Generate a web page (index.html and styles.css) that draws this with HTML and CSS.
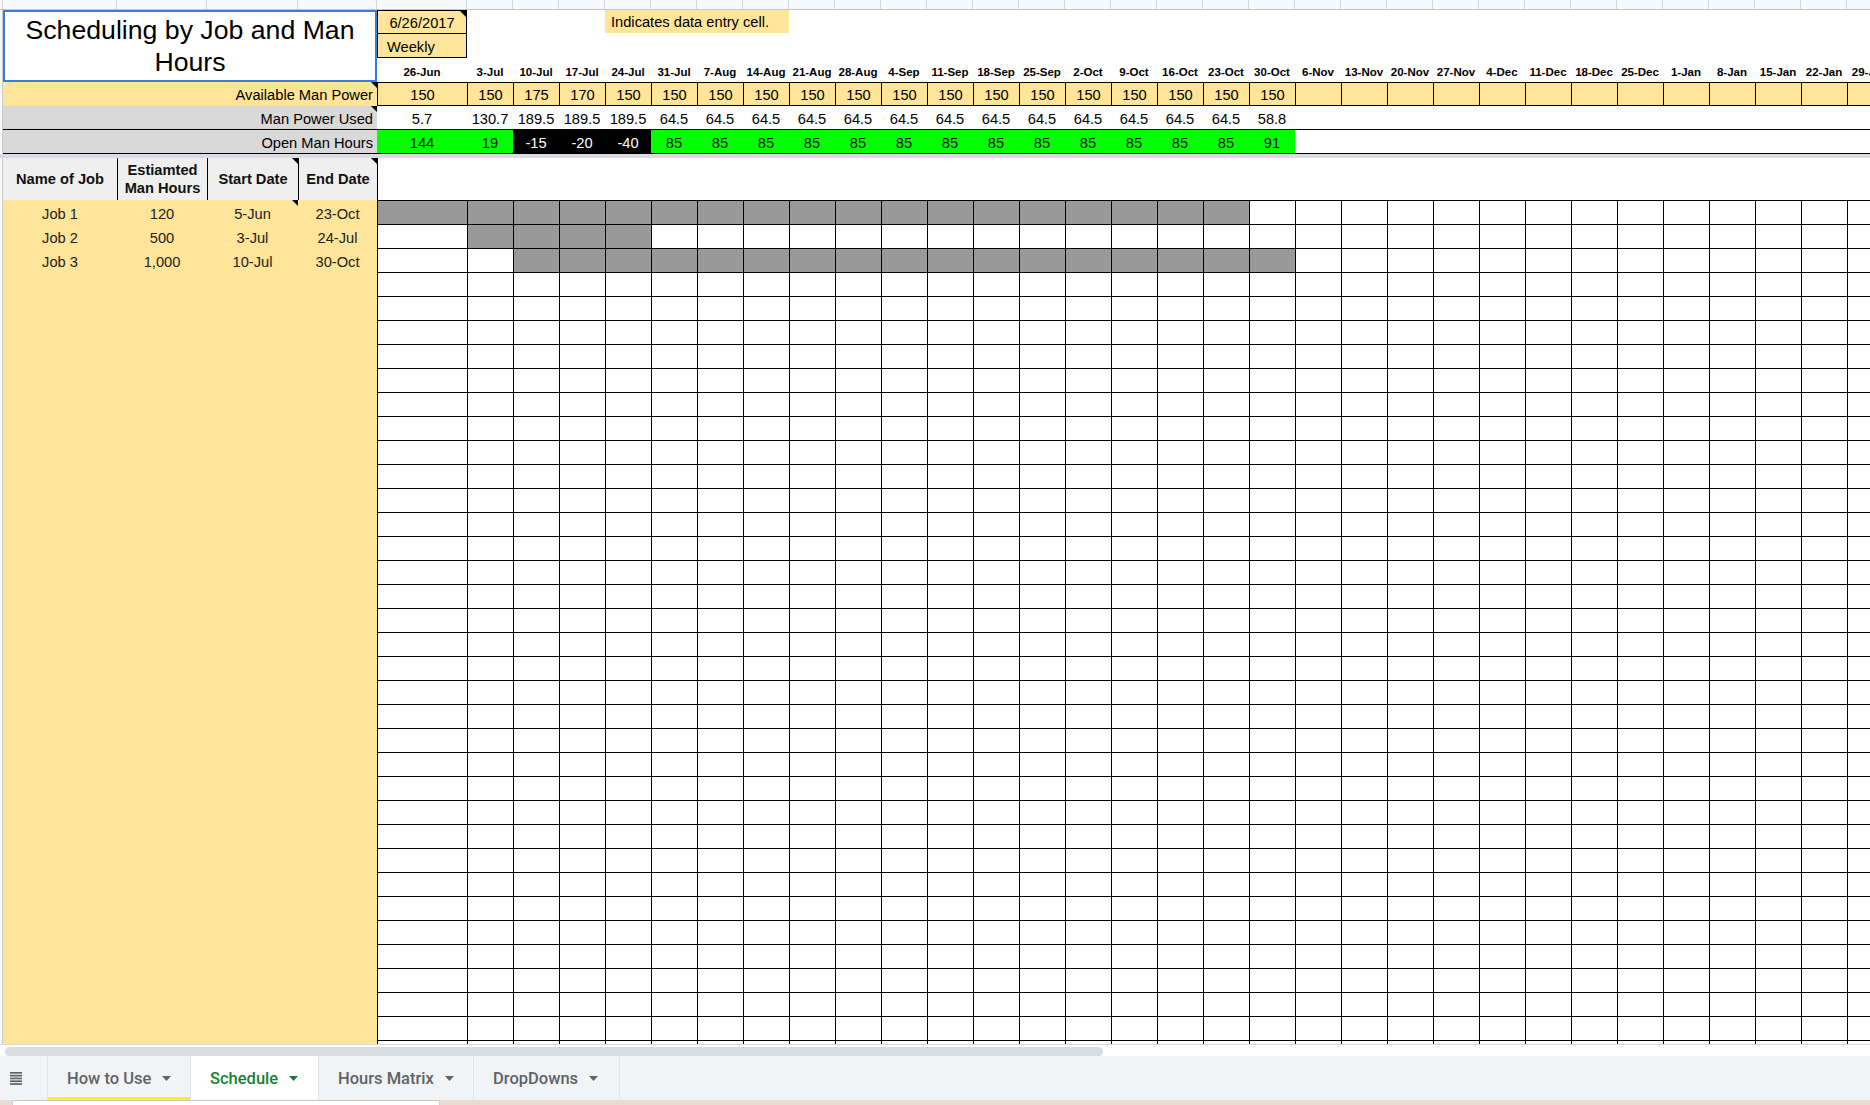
FILE: index.html
```html
<!DOCTYPE html>
<html>
<head>
<meta charset="utf-8">
<link rel="stylesheet" href="styles.css">
</head>
<body>
<div class="app">
  <div class="colhdr cols">
    <i></i><i></i><i></i><i></i><i></i><i></i>
    <i></i><i></i><i></i><i></i><i></i><i></i><i></i><i></i><i></i><i></i>
    <i></i><i></i><i></i><i></i><i></i><i></i><i></i><i></i><i></i><i></i>
    <i></i><i></i><i></i><i></i><i></i><i></i><i></i><i></i><i></i><i></i>
    <i></i>
  </div>

  <div class="frozen cols">
    <div class="strip"></div>
    <div class="title">Scheduling by Job and Man Hours</div>
    <div class="c r1 entry note">6/26/2017</div>
    <div class="c r1 info">Indicates data entry cell.</div>
    <div class="c r2 entry weekly">Weekly</div>

    <div class="c r3 dh">26-Jun</div><div class="c r3 dh">3-Jul</div><div class="c r3 dh">10-Jul</div><div class="c r3 dh">17-Jul</div><div class="c r3 dh">24-Jul</div><div class="c r3 dh">31-Jul</div><div class="c r3 dh">7-Aug</div><div class="c r3 dh">14-Aug</div><div class="c r3 dh">21-Aug</div><div class="c r3 dh">28-Aug</div><div class="c r3 dh">4-Sep</div><div class="c r3 dh">11-Sep</div><div class="c r3 dh">18-Sep</div><div class="c r3 dh">25-Sep</div><div class="c r3 dh">2-Oct</div><div class="c r3 dh">9-Oct</div><div class="c r3 dh">16-Oct</div><div class="c r3 dh">23-Oct</div><div class="c r3 dh">30-Oct</div><div class="c r3 dh">6-Nov</div><div class="c r3 dh">13-Nov</div><div class="c r3 dh">20-Nov</div><div class="c r3 dh">27-Nov</div><div class="c r3 dh">4-Dec</div><div class="c r3 dh">11-Dec</div><div class="c r3 dh">18-Dec</div><div class="c r3 dh">25-Dec</div><div class="c r3 dh">1-Jan</div><div class="c r3 dh">8-Jan</div><div class="c r3 dh">15-Jan</div><div class="c r3 dh">22-Jan</div><div class="c r3 dh">29-Jan</div>

    <div class="lbl r4 yel note">Available Man Power</div>
    <div class="c r4 av">150</div><div class="c r4 av">150</div><div class="c r4 av">175</div><div class="c r4 av">170</div><div class="c r4 av">150</div><div class="c r4 av">150</div><div class="c r4 av">150</div><div class="c r4 av">150</div><div class="c r4 av">150</div><div class="c r4 av">150</div><div class="c r4 av">150</div><div class="c r4 av">150</div><div class="c r4 av">150</div><div class="c r4 av">150</div><div class="c r4 av">150</div><div class="c r4 av">150</div><div class="c r4 av">150</div><div class="c r4 av">150</div><div class="c r4 av">150</div>
    <div class="c r4 av"></div><div class="c r4 av"></div><div class="c r4 av"></div><div class="c r4 av"></div><div class="c r4 av"></div><div class="c r4 av"></div><div class="c r4 av"></div><div class="c r4 av"></div><div class="c r4 av"></div><div class="c r4 av"></div><div class="c r4 av"></div><div class="c r4 av"></div><div class="c r4 av"></div>

    <div class="lbl r5 gry note">Man Power Used</div>
    <div class="c r5 u">5.7</div><div class="c r5 u">130.7</div><div class="c r5 u">189.5</div><div class="c r5 u">189.5</div><div class="c r5 u">189.5</div><div class="c r5 u">64.5</div><div class="c r5 u">64.5</div><div class="c r5 u">64.5</div><div class="c r5 u">64.5</div><div class="c r5 u">64.5</div><div class="c r5 u">64.5</div><div class="c r5 u">64.5</div><div class="c r5 u">64.5</div><div class="c r5 u">64.5</div><div class="c r5 u">64.5</div><div class="c r5 u">64.5</div><div class="c r5 u">64.5</div><div class="c r5 u">64.5</div><div class="c r5 u">58.8</div>
    <div class="c r5 u"></div><div class="c r5 u"></div><div class="c r5 u"></div><div class="c r5 u"></div><div class="c r5 u"></div><div class="c r5 u"></div><div class="c r5 u"></div><div class="c r5 u"></div><div class="c r5 u"></div><div class="c r5 u"></div><div class="c r5 u"></div><div class="c r5 u"></div><div class="c r5 u"></div>

    <div class="lbl r6 gry">Open Man Hours</div>
    <div class="c r6 o g">144</div><div class="c r6 o g">19</div><div class="c r6 o k">-15</div><div class="c r6 o k">-20</div><div class="c r6 o k">-40</div><div class="c r6 o g">85</div><div class="c r6 o g">85</div><div class="c r6 o g">85</div><div class="c r6 o g">85</div><div class="c r6 o g">85</div><div class="c r6 o g">85</div><div class="c r6 o g">85</div><div class="c r6 o g">85</div><div class="c r6 o g">85</div><div class="c r6 o g">85</div><div class="c r6 o g">85</div><div class="c r6 o g">85</div><div class="c r6 o g">85</div><div class="c r6 o g">91</div>
    <div class="c r6 o"></div><div class="c r6 o"></div><div class="c r6 o"></div><div class="c r6 o"></div><div class="c r6 o"></div><div class="c r6 o"></div><div class="c r6 o"></div><div class="c r6 o"></div><div class="c r6 o"></div><div class="c r6 o"></div><div class="c r6 o"></div><div class="c r6 o"></div><div class="c r6 o"></div>
  </div>

  <div class="freeze"></div>

  <div class="body cols">
    <div class="strip"></div>
    <div class="h hA">Name of Job</div>
    <div class="h hB">Estiamted<br>Man Hours</div>
    <div class="h hC note">Start Date</div>
    <div class="h hD note">End Date</div>
    <div class="hR"></div>

    <div class="fill"></div>

    <div class="j ca br2">Job 1</div><div class="j cb br2">120</div><div class="j cc br2 note">5-Jun</div><div class="j cd br2">23-Oct</div>
    <div class="j ca br3">Job 2</div><div class="j cb br3">500</div><div class="j cc br3">3-Jul</div><div class="j cd br3">24-Jul</div>
    <div class="j ca br4">Job 3</div><div class="j cb br4">1,000</div><div class="j cc br4">10-Jul</div><div class="j cd br4">30-Oct</div>

    <div class="bar b1"></div>
    <div class="bar b2"></div>
    <div class="bar b3"></div>

    <div class="glA"></div>
    <div class="glB"></div>
  </div>

  <div class="hscroll"><div class="thumb"></div></div>

  <div class="tabbar">
    <div class="menu">
      <svg width="12" height="13" viewBox="0 0 12 13"><rect y="0" width="12" height="1.7"/><rect y="2.8" width="12" height="1.7"/><rect y="5.6" width="12" height="1.7"/><rect y="8.4" width="12" height="1.7"/><rect y="11.2" width="12" height="1.7"/></svg>
    </div>
    <div class="tab t1 marked">How to Use<svg class="dd" width="9" height="5" viewBox="0 0 9 5"><path d="M0 0h9L4.5 5z"/></svg></div>
    <div class="tab t2 active">Schedule<svg class="dd" width="9" height="5" viewBox="0 0 9 5"><path d="M0 0h9L4.5 5z"/></svg></div>
    <div class="tab t3">Hours Matrix<svg class="dd" width="9" height="5" viewBox="0 0 9 5"><path d="M0 0h9L4.5 5z"/></svg></div>
    <div class="tab t4">DropDowns<svg class="dd" width="9" height="5" viewBox="0 0 9 5"><path d="M0 0h9L4.5 5z"/></svg></div>
    <div class="tabrest"></div>
  </div>

  <div class="bottom"><div class="popup"></div></div>
</div>
</body>
</html>
```

FILE: styles.css
```css
body {
  margin: 0;
  background: #fff;
}

.app {
  width: 1870px;
  height: 1105px;
  overflow: hidden;
  background: #fff;
  font-family: "Liberation Sans", Arial, sans-serif;
  color: #000;
}

.cols {
  display: grid;
  grid-template-columns: 3px 114px 90px 91px 79px 90px repeat(31, 46px);
  width: 1893px;
}

/* column header strip */
.colhdr {
  height: 10px;
  box-sizing: border-box;
  background: #f8f9fa;
  border-bottom: 1px solid #c4c7c5;
}
.colhdr > i {
  border-right: 1px solid #d6d6d6;
}

/* frozen rows */
.frozen {
  grid-template-rows: repeat(6, 24px);
}

.strip {
  grid-column: 1;
  grid-row: 1 / -1;
  background: #f8f9fa;
  border-right: 1px solid #c8c8c8;
}

.title {
  grid-column: 2 / 6;
  grid-row: 1 / 4;
  box-sizing: border-box;
  border: 2px solid #3d7bd6;
  display: flex;
  align-items: center;
  justify-content: center;
  text-align: center;
  font-size: 26.67px;
  line-height: 32px;
  padding: 0 6px;
  background: #fff;
}

.c {
  display: flex;
  align-items: center;
  justify-content: center;
  font-size: 14.67px;
  white-space: nowrap;
  box-sizing: border-box;
  overflow: hidden;
  padding-top: 2px;
}

.r1 { grid-row: 1; }
.r2 { grid-row: 2; }
.r3 { grid-row: 3; }
.r4 { grid-row: 4; }
.r5 { grid-row: 5; }
.r6 { grid-row: 6; }

.entry {
  background: #ffe599;
  border: 1px solid #000;
}
.weekly {
  border-top: none;
  justify-content: flex-start;
  padding-left: 9px;
}

.note { position: relative; }
.note::after {
  content: "";
  position: absolute;
  top: 0;
  right: 0;
  border-style: solid;
  border-width: 0 6px 6px 0;
  border-color: transparent #000 transparent transparent;
}

.info {
  grid-column: 10 / 14;
  height: 23px;
  background: #ffe599;
  justify-content: flex-start;
  padding-left: 6px;
  padding-top: 1px;
}

.dh {
  font-weight: bold;
  font-size: 11.5px;
  align-items: flex-end;
  padding-top: 0;
  padding-bottom: 4px;
}

.lbl {
  grid-column: 2 / 6;
  display: flex;
  align-items: center;
  justify-content: flex-end;
  padding-right: 4px;
  padding-top: 2px;
  font-size: 14.67px;
  box-sizing: border-box;
  white-space: nowrap;
}
.yel { background: #ffe599; }
.gry {
  background: #d9d9d9;
  border-bottom: 1px solid #000;
}

.av {
  background: #ffe599;
  border-top: 1px solid #000;
  border-bottom: 1px solid #000;
  border-left: 1px solid #000;
}
.u, .o { border-bottom: 1px solid #000; }
.g { background: #00ff00; color: #111; }
.k { background: #000; color: #fff; }

.freeze {
  height: 4px;
  background: #dadce0;
}

/* scrolling body */
.body {
  grid-template-rows: 42px repeat(36, 24px);
  height: 886px;
  overflow: hidden;
}

.h {
  grid-row: 1;
  background: #efefef;
  font-weight: bold;
  font-size: 14.67px;
  line-height: 18px;
  display: flex;
  align-items: center;
  justify-content: center;
  text-align: center;
  box-sizing: border-box;
  color: #111;
}
.hA { grid-column: 2; }
.hB { grid-column: 3; border-left: 1px solid #000; }
.hC { grid-column: 4; border-left: 1px solid #000; }
.hD { grid-column: 5; border-left: 1px solid #000; }
.hR {
  grid-column: 6 / -1;
  grid-row: 1;
  border-left: 1px solid #000;
  background: #fff;
}

.fill {
  grid-column: 2 / 6;
  grid-row: 2 / -1;
  background: #ffe599;
}

.j {
  display: flex;
  align-items: center;
  justify-content: center;
  font-size: 14.67px;
  color: #222;
  padding-top: 3px;
  box-sizing: border-box;
}
.ca { grid-column: 2; }
.cb { grid-column: 3; }
.cc { grid-column: 4; }
.cd { grid-column: 5; }
.br2 { grid-row: 2; }
.br3 { grid-row: 3; }
.br4 { grid-row: 4; }

.bar { background: #999999; }
.b1 { grid-column: 6 / 24; grid-row: 2; }
.b2 { grid-column: 7 / 11; grid-row: 3; }
.b3 { grid-column: 8 / 25; grid-row: 4; }

.glA {
  grid-column: 6;
  grid-row: 2 / -1;
  background-image:
    linear-gradient(to right, #000 1px, transparent 1px),
    linear-gradient(to bottom, #000 1px, transparent 1px);
  background-size: 100% 100%, 100% 24px;
  background-repeat: no-repeat, repeat-y;
}
.glB {
  grid-column: 7 / -1;
  grid-row: 2 / -1;
  background-image:
    linear-gradient(to right, #000 1px, transparent 1px),
    linear-gradient(to bottom, #000 1px, transparent 1px);
  background-size: 46px 100%, 100% 24px;
  background-repeat: repeat-x, repeat-y;
}

/* horizontal scrollbar */
.hscroll {
  height: 12px;
  box-sizing: border-box;
  border-top: 1px solid #d8d8d8;
  background: #fff;
  padding: 2px 0 0 5px;
}
.thumb {
  width: 1098px;
  height: 9px;
  border-radius: 5px;
  background: #dadce0;
}

/* sheet tabs */
.tabbar {
  height: 44px;
  display: flex;
  background: #f1f3f4;
  font-family: Roboto, "Noto Sans", sans-serif;
  font-weight: 500;
  font-size: 16.5px;
  color: #5f6368;
}
.menu {
  width: 47px;
  flex: none;
  display: flex;
  align-items: center;
  padding-left: 10px;
  box-sizing: border-box;
  fill: #5f6368;
}
.tab {
  flex: none;
  display: flex;
  align-items: center;
  box-sizing: border-box;
  padding-left: 19px;
  gap: 11px;
  border-left: 1px solid #e2e3e4;
  white-space: nowrap;
}
.tab .dd { fill: currentColor; margin-top: 1px; }
.t1 { width: 143px; }
.t2 { width: 128px; }
.t3 { width: 155px; }
.t4 { width: 147px; border-right: 1px solid #e2e3e4; }
.marked { box-shadow: inset 0 -3px 0 #f3f322; }
.active {
  background: #fff;
  color: #188038;
}
.tabrest { flex: 1; }

.bottom {
  height: 5px;
  background: #e9ddd1;
  padding-left: 12px;
}
.popup {
  width: 428px;
  height: 5px;
  box-sizing: border-box;
  background: #fff;
  border-top: 1px solid #c8c8c8;
  border-left: 1px solid #cfcfcf;
  border-right: 1px solid #cfcfcf;
}
```
